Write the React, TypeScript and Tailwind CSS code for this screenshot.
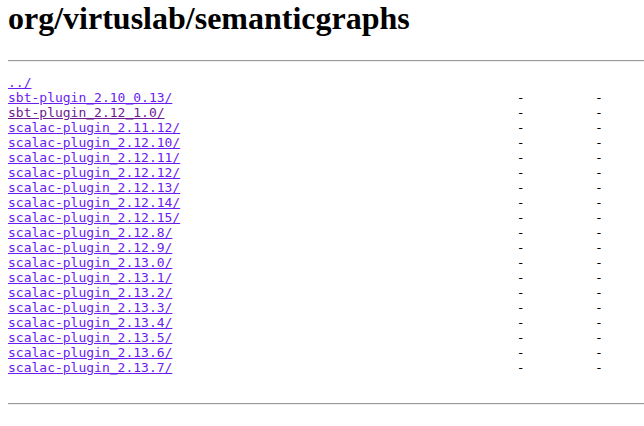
import React from "react";

const items: { name: string; visited?: boolean }[] = [
  { name: "sbt-plugin_2.10_0.13/" },
  { name: "sbt-plugin_2.12_1.0/", visited: true },
  { name: "scalac-plugin_2.11.12/" },
  { name: "scalac-plugin_2.12.10/" },
  { name: "scalac-plugin_2.12.11/" },
  { name: "scalac-plugin_2.12.12/" },
  { name: "scalac-plugin_2.12.13/" },
  { name: "scalac-plugin_2.12.14/" },
  { name: "scalac-plugin_2.12.15/" },
  { name: "scalac-plugin_2.12.8/" },
  { name: "scalac-plugin_2.12.9/" },
  { name: "scalac-plugin_2.13.0/" },
  { name: "scalac-plugin_2.13.1/" },
  { name: "scalac-plugin_2.13.2/" },
  { name: "scalac-plugin_2.13.3/" },
  { name: "scalac-plugin_2.13.4/" },
  { name: "scalac-plugin_2.13.5/" },
  { name: "scalac-plugin_2.13.6/" },
  { name: "scalac-plugin_2.13.7/" },
];

function pad(name: string) {
  return " ".repeat(Math.max(1, 65 - name.length));
}

export default function App() {
  return (
    <div className="min-h-[426px] w-[644px] overflow-hidden bg-white pl-2 text-black">
      <h1 className="m-0 font-['Liberation_Serif',serif] text-[32px] font-bold leading-[37px]">
        org/virtuslab/semanticgraphs
      </h1>
      <hr className="mt-[23px] h-0 border-0 border-t border-b border-t-[#9a9a9a] border-b-[#eeeeee]" />
      <pre className="mt-[13px] font-['DejaVu_Sans_Mono',monospace] text-[13px] leading-[15px]">
        <a href="#" className="text-[#6a1cf0] underline">
          ../
        </a>
        {"\n"}
        {items.map((it) => (
          <React.Fragment key={it.name}>
            <a
              href="#"
              className={
                it.visited
                  ? "text-[#6e1b92] underline"
                  : "text-[#6a1cf0] underline"
              }
            >
              {it.name}
            </a>
            {pad(it.name) + "-         -\n"}
          </React.Fragment>
        ))}
      </pre>
      <hr className="mt-[28px] h-0 border-0 border-t border-b border-t-[#9a9a9a] border-b-[#eeeeee]" />
    </div>
  );
}
